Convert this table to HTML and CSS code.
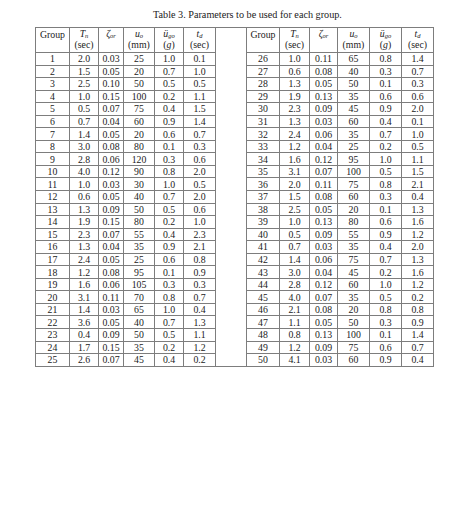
FILE: index.html
```html
<!DOCTYPE html>
<html>
<head>
<meta charset="utf-8">
<link rel="stylesheet" href="styles.css">
</head>
<body>
<div class="title">Table 3. Parameters to be used for each group.</div>
<table class="params">
<colgroup>
<col class="c34"><col class="c29"><col class="c25"><col class="c31"><col class="c29"><col class="c32">
<col class="c31">
<col class="c33"><col class="c30"><col class="c28"><col class="c32"><col class="c32"><col class="c32">
</colgroup>
<tr class="hd">
<th>Group</th><th><span class="ln"><i>T</i><sub><i>n</i></sub></span><span class="ln">(sec)</span></th><th><span class="ln"><i>ζ</i><sub><i>or</i></sub></span></th><th><span class="ln"><i>u</i><sub><i>o</i></sub></span><span class="ln">(mm)</span></th><th><span class="ln"><i>ü</i><sub><i>go</i></sub></span><span class="ln">(<i>g</i>)</span></th><th><span class="ln"><i>t</i><sub><i>d</i></sub></span><span class="ln">(sec)</span></th>
<td class="sp" rowspan="26"></td>
<th>Group</th><th><span class="ln"><i>T</i><sub><i>n</i></sub></span><span class="ln">(sec)</span></th><th><span class="ln"><i>ζ</i><sub><i>or</i></sub></span></th><th><span class="ln"><i>u</i><sub><i>o</i></sub></span><span class="ln">(mm)</span></th><th><span class="ln"><i>ü</i><sub><i>go</i></sub></span><span class="ln">(<i>g</i>)</span></th><th><span class="ln"><i>t</i><sub><i>d</i></sub></span><span class="ln">(sec)</span></th>
</tr>
<tr><td>1</td><td>2.0</td><td>0.03</td><td>25</td><td>1.0</td><td>0.1</td><td>26</td><td>1.0</td><td>0.11</td><td>65</td><td>0.8</td><td>1.4</td></tr>
<tr><td>2</td><td>1.5</td><td>0.05</td><td>20</td><td>0.7</td><td>1.0</td><td>27</td><td>0.6</td><td>0.08</td><td>40</td><td>0.3</td><td>0.7</td></tr>
<tr><td>3</td><td>2.5</td><td>0.10</td><td>50</td><td>0.5</td><td>0.5</td><td>28</td><td>1.3</td><td>0.05</td><td>50</td><td>0.1</td><td>0.3</td></tr>
<tr><td>4</td><td>1.0</td><td>0.15</td><td>100</td><td>0.2</td><td>1.1</td><td>29</td><td>1.9</td><td>0.13</td><td>35</td><td>0.6</td><td>0.6</td></tr>
<tr><td>5</td><td>0.5</td><td>0.07</td><td>75</td><td>0.4</td><td>1.5</td><td>30</td><td>2.3</td><td>0.09</td><td>45</td><td>0.9</td><td>2.0</td></tr>
<tr><td>6</td><td>0.7</td><td>0.04</td><td>60</td><td>0.9</td><td>1.4</td><td>31</td><td>1.3</td><td>0.03</td><td>60</td><td>0.4</td><td>0.1</td></tr>
<tr><td>7</td><td>1.4</td><td>0.05</td><td>20</td><td>0.6</td><td>0.7</td><td>32</td><td>2.4</td><td>0.06</td><td>35</td><td>0.7</td><td>1.0</td></tr>
<tr><td>8</td><td>3.0</td><td>0.08</td><td>80</td><td>0.1</td><td>0.3</td><td>33</td><td>1.2</td><td>0.04</td><td>25</td><td>0.2</td><td>0.5</td></tr>
<tr><td>9</td><td>2.8</td><td>0.06</td><td>120</td><td>0.3</td><td>0.6</td><td>34</td><td>1.6</td><td>0.12</td><td>95</td><td>1.0</td><td>1.1</td></tr>
<tr><td>10</td><td>4.0</td><td>0.12</td><td>90</td><td>0.8</td><td>2.0</td><td>35</td><td>3.1</td><td>0.07</td><td>100</td><td>0.5</td><td>1.5</td></tr>
<tr><td>11</td><td>1.0</td><td>0.03</td><td>30</td><td>1.0</td><td>0.5</td><td>36</td><td>2.0</td><td>0.11</td><td>75</td><td>0.8</td><td>2.1</td></tr>
<tr><td>12</td><td>0.6</td><td>0.05</td><td>40</td><td>0.7</td><td>2.0</td><td>37</td><td>1.5</td><td>0.08</td><td>60</td><td>0.3</td><td>0.4</td></tr>
<tr><td>13</td><td>1.3</td><td>0.09</td><td>50</td><td>0.5</td><td>0.6</td><td>38</td><td>2.5</td><td>0.05</td><td>20</td><td>0.1</td><td>1.3</td></tr>
<tr><td>14</td><td>1.9</td><td>0.15</td><td>80</td><td>0.2</td><td>1.0</td><td>39</td><td>1.0</td><td>0.13</td><td>80</td><td>0.6</td><td>1.6</td></tr>
<tr><td>15</td><td>2.3</td><td>0.07</td><td>55</td><td>0.4</td><td>2.3</td><td>40</td><td>0.5</td><td>0.09</td><td>55</td><td>0.9</td><td>1.2</td></tr>
<tr><td>16</td><td>1.3</td><td>0.04</td><td>35</td><td>0.9</td><td>2.1</td><td>41</td><td>0.7</td><td>0.03</td><td>35</td><td>0.4</td><td>2.0</td></tr>
<tr><td>17</td><td>2.4</td><td>0.05</td><td>25</td><td>0.6</td><td>0.8</td><td>42</td><td>1.4</td><td>0.06</td><td>75</td><td>0.7</td><td>1.3</td></tr>
<tr><td>18</td><td>1.2</td><td>0.08</td><td>95</td><td>0.1</td><td>0.9</td><td>43</td><td>3.0</td><td>0.04</td><td>45</td><td>0.2</td><td>1.6</td></tr>
<tr><td>19</td><td>1.6</td><td>0.06</td><td>105</td><td>0.3</td><td>0.3</td><td>44</td><td>2.8</td><td>0.12</td><td>60</td><td>1.0</td><td>1.2</td></tr>
<tr><td>20</td><td>3.1</td><td>0.11</td><td>70</td><td>0.8</td><td>0.7</td><td>45</td><td>4.0</td><td>0.07</td><td>35</td><td>0.5</td><td>0.2</td></tr>
<tr><td>21</td><td>1.4</td><td>0.03</td><td>65</td><td>1.0</td><td>0.4</td><td>46</td><td>2.1</td><td>0.08</td><td>20</td><td>0.8</td><td>0.8</td></tr>
<tr><td>22</td><td>3.6</td><td>0.05</td><td>40</td><td>0.7</td><td>1.3</td><td>47</td><td>1.1</td><td>0.05</td><td>50</td><td>0.3</td><td>0.9</td></tr>
<tr><td>23</td><td>0.4</td><td>0.09</td><td>50</td><td>0.5</td><td>1.1</td><td>48</td><td>0.8</td><td>0.13</td><td>100</td><td>0.1</td><td>1.4</td></tr>
<tr><td>24</td><td>1.7</td><td>0.15</td><td>35</td><td>0.2</td><td>1.2</td><td>49</td><td>1.2</td><td>0.09</td><td>75</td><td>0.6</td><td>0.7</td></tr>
<tr><td>25</td><td>2.6</td><td>0.07</td><td>45</td><td>0.4</td><td>0.2</td><td>50</td><td>4.1</td><td>0.03</td><td>60</td><td>0.9</td><td>0.4</td></tr>
</table>
</body>
</html>
```
FILE: styles.css
```css
html, body {
  margin: 0;
  padding: 0;
  background: #ffffff;
}
body {
  font-family: "Liberation Serif", "Times New Roman", serif;
  color: #222222;
}
.title {
  box-sizing: border-box;
  width: 474px;
  padding-left: 21px;
  padding-top: 9px;
  height: 27px;
  font-size: 10.2px;
  line-height: 12px;
  text-align: center;
}
.params {
  margin-left: 35px;
  width: 398px;
  table-layout: fixed;
  border-collapse: collapse;
  font-size: 9.8px;
}
.c25 { width: 25px; }
.c28 { width: 28px; }
.c29 { width: 29px; }
.c30 { width: 30px; }
.c31 { width: 31px; }
.c32 { width: 32px; }
.c33 { width: 33px; }
.c34 { width: 34px; }
.params th,
.params td {
  border: 1px solid #7d7d7d;
  padding: 0;
  text-align: center;
  white-space: nowrap;
  overflow: hidden;
}
.params th {
  font-weight: normal;
  vertical-align: top;
  line-height: 11px;
  padding-top: 1px;
}
.params .ln {
  display: block;
  height: 11px;
  line-height: 10px;
}
.params .hd {
  height: 25px;
}
.params tr {
  height: 12.56px;
}
.params td {
  line-height: 11px;
  vertical-align: middle;
}
.params sub {
  font-size: 6.5px;
  line-height: 0;
  vertical-align: -1px;
}
.params .sp {
  border-top: 1px solid #7d7d7d;
  border-bottom: 1px solid #7d7d7d;
}
```
